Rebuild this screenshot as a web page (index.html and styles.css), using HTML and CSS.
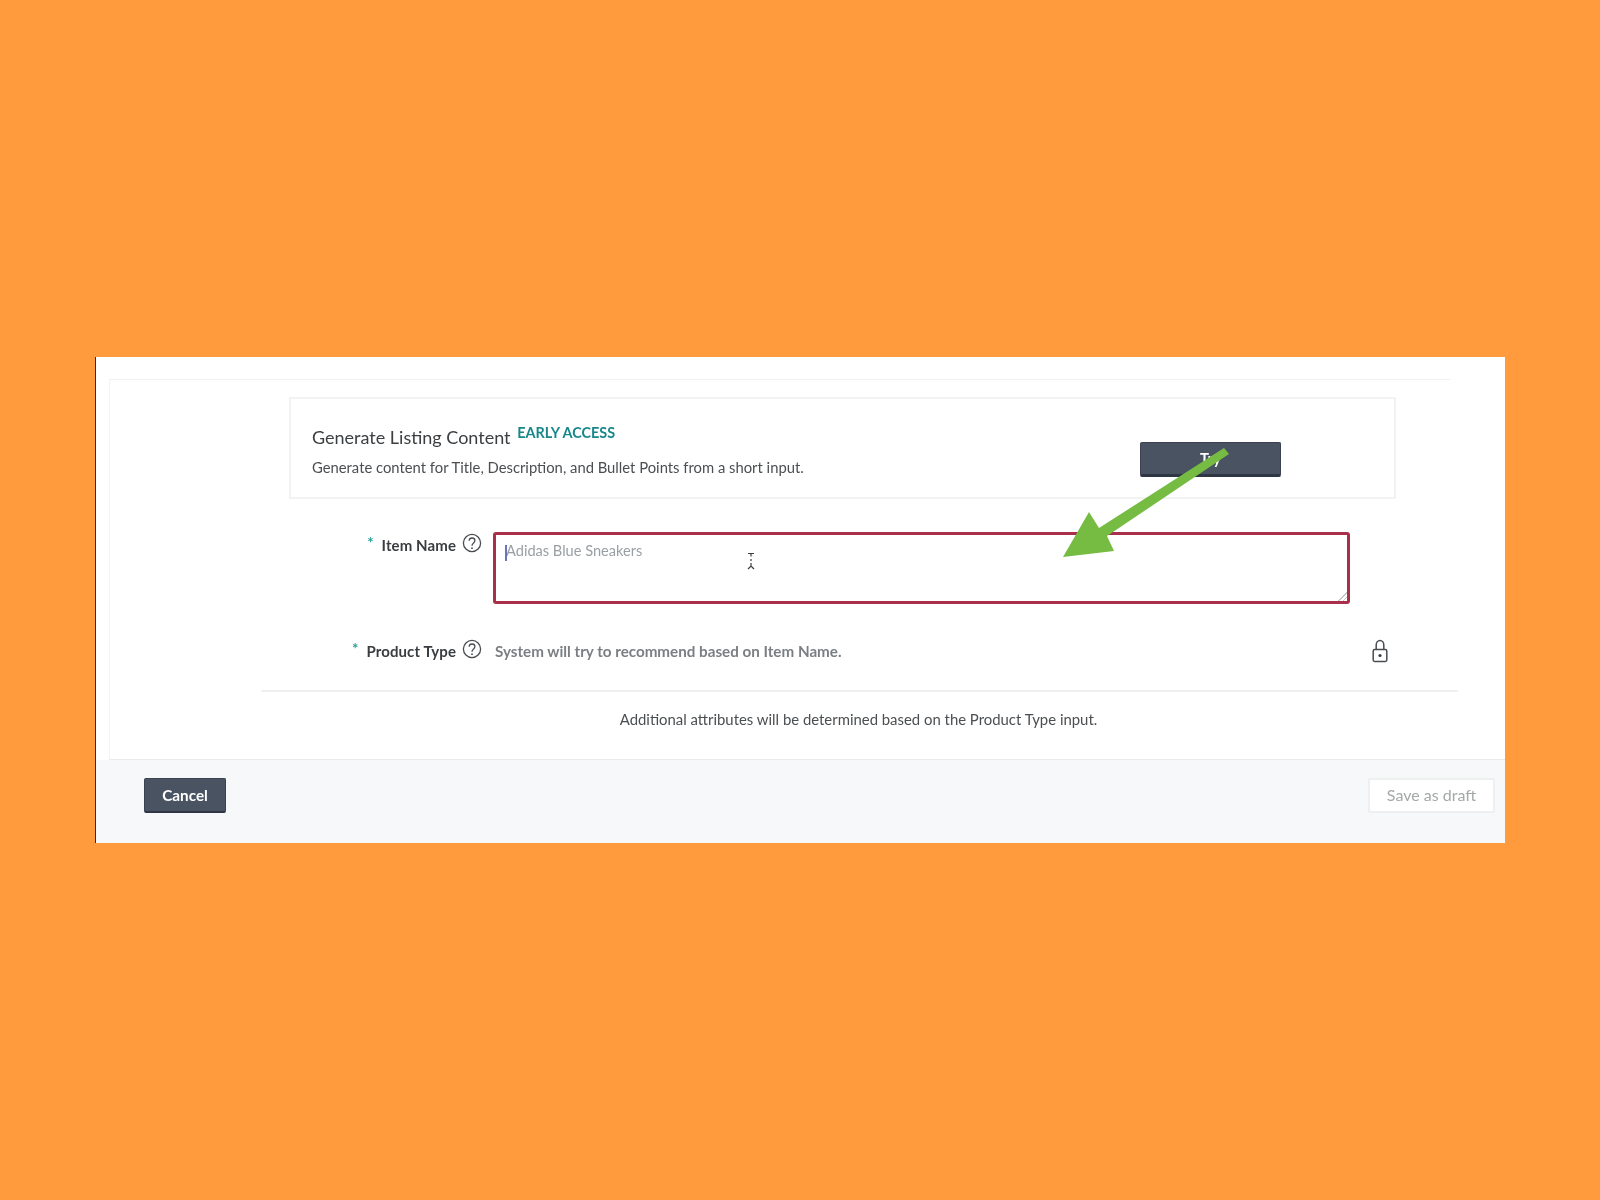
FILE: index.html
```html
<!DOCTYPE html>
<html lang="en">
<head>
<meta charset="utf-8">
<title>Generate Listing Content</title>
<link rel="stylesheet" href="styles.css">
</head>
<body>
<main class="window">
  <section class="panel">
    <div class="card">
      <div class="card-text">
        <h1 class="title">Generate Listing Content <sup class="badge">EARLY ACCESS</sup></h1>
        <p class="desc">Generate content for Title, Description, and Bullet Points from a short input.</p>
      </div>
      <button class="btn btn-try" type="button">Try</button>
    </div>
    <div class="row row-item">
      <div class="label">
        <span class="star">*</span><span class="label-text">Item Name</span>
        <svg class="help" viewBox="0 0 20 20" aria-hidden="true"><circle cx="10" cy="10" r="8.6"/><path d="M7.2 7.8c0-1.7 1.2-2.8 2.9-2.8s2.8 1 2.8 2.5c0 1.2-.7 1.8-1.5 2.6-.8.8-1.4 1.5-1.4 2.7"/><circle class="dot" cx="10" cy="15.2" r=".9"/></svg>
      </div>
      <div class="field-wrap">
        <textarea class="field" placeholder="Adidas Blue Sneakers"></textarea>
        <span class="caret"></span>
      </div>
    </div>
    <div class="row row-type">
      <div class="label">
        <span class="star">*</span><span class="label-text">Product Type</span>
        <svg class="help" viewBox="0 0 20 20" aria-hidden="true"><circle cx="10" cy="10" r="8.6"/><path d="M7.2 7.8c0-1.7 1.2-2.8 2.9-2.8s2.8 1 2.8 2.5c0 1.2-.7 1.8-1.5 2.6-.8.8-1.4 1.5-1.4 2.7"/><circle class="dot" cx="10" cy="15.2" r=".9"/></svg>
      </div>
      <div class="type-value">
        <span>System will try to recommend based on Item Name.</span>
        <svg class="lock" viewBox="0 0 16 24" aria-hidden="true"><path d="M4.2 10.5V6a3.8 4.5 0 0 1 7.6 0v4.5"/><rect x="1.2" y="10.5" width="13.6" height="12" rx="1.4"/><circle class="dot" cx="8" cy="16.5" r="1.6"/></svg>
      </div>
    </div>
    <hr class="divider">
    <p class="note">Additional attributes will be determined based on the Product Type input.</p>
  </section>
  <footer class="footer">
    <button class="btn btn-cancel" type="button">Cancel</button>
    <button class="btn btn-draft" type="button">Save as draft</button>
  </footer>
  <svg class="overlay" viewBox="95 357 1410 486" aria-hidden="true">
    <polygon class="arrow" points="1224,448 1229,454 1107,536 1114,551 1063,557 1089,512 1099,528"/>
    <path class="ibeam" d="M748 553.5h6M751 553.5v3M751 559v2M751 563v3M748 569l3-3 3 3"/>
  </svg>
</main>
</body>
</html>
```
FILE: styles.css
```css
* { box-sizing: border-box; }
html, body { margin: 0; height: 100%; }
body {
  background: #ff9a3d;
  font-family: Lato, "Liberation Sans", sans-serif;
  padding: 357px 95px 0;
}
.window {
  position: relative;
  width: 1410px;
  height: 486px;
  background: #fff;
  border-left: 1px solid #3a2a1a;
  padding-top: 22px;
  display: flex;
  flex-direction: column;
  filter: blur(0.45px);
}
.panel {
  margin-left: 13px;
  height: 381px;
  border-left: 1px solid #f3f4f4;
  border-bottom: 1px solid #e9ebeb;
  background: linear-gradient(#f0f1f1, #f0f1f1) top left / 1340px 1px no-repeat;
  padding-top: 18px;
}
.card {
  margin-left: 179px;
  width: 1107px;
  height: 102px;
  border: 2px solid #f1f2f2;
  display: flex;
  align-items: flex-start;
  padding: 0 0 0 21px;
}
.card-text { padding-top: 26px; }
.title {
  margin: 0;
  font-size: 18px;
  font-weight: 400;
  line-height: 24px;
  color: #3b3f42;
  white-space: nowrap;
}
.badge {
  position: relative;
  top: -6.5px;
  margin-left: 2px;
  font-size: 14.4px;
  font-weight: 700;
  line-height: 0;
  color: #17878a;
  vertical-align: baseline;
}
.desc {
  margin: 8px 0 0;
  font-size: 14.8px;
  line-height: 20px;
  color: #4b4f52;
  white-space: nowrap;
}
.btn {
  font-family: inherit;
  font-size: 15px;
  line-height: 1;
  border-radius: 2px;
  cursor: pointer;
}
.btn-try {
  margin: 43px 113px 0 auto;
  width: 141px;
  height: 35px;
  background: #4a5362;
  border: 1px solid #3b4352;
  border-bottom: 3px solid #2f3744;
  color: #fff;
  font-weight: 700;
}
.row {
  display: grid;
  grid-template-columns: 372px 1fr;
  column-gap: 11px;
  align-items: start;
}
.row-item { margin-top: 33px; }
.row-type { margin-top: 35px; }
.label {
  display: flex;
  justify-content: flex-end;
  align-items: center;
  height: 24px;
}
.row-item .label { margin-top: 1px; }
.star {
  color: #2aa39a;
  font-weight: 700;
  font-size: 15px;
  margin-right: 8px;
  position: relative;
  top: -3px;
}
.label-text {
  font-size: 15px;
  font-weight: 700;
  letter-spacing: 0.1px;
  color: #3a3d40;
  white-space: nowrap;
}
.help {
  width: 20px;
  height: 20px;
  margin-left: 6px;
  margin-top: -4px;
  flex: none;
  fill: none;
  stroke: #4a4d50;
  stroke-width: 1.3;
}
.help .dot { fill: #4a4d50; stroke: none; }
.field-wrap {
  position: relative;
  width: 857px;
  height: 72px;
}
.field {
  display: block;
  width: 100%;
  height: 100%;
  min-height: 72px;
  padding: 6px 10px;
  border: 3px solid #a8304a;
  border-radius: 3px;
  outline: 0;
  font-family: inherit;
  font-size: 14.6px;
  line-height: 20px;
  background: #fff;
}
.field::-webkit-resizer {
  background: linear-gradient(135deg, transparent 68%, #c5c8ca 68%, #c5c8ca 74%, transparent 74%, transparent 84%, #c5c8ca 84%, #c5c8ca 90%, transparent 90%);
}
.field::placeholder { color: #9a9fa3; opacity: 1; }
.caret {
  position: absolute;
  left: 12px;
  top: 13px;
  width: 1.5px;
  height: 16px;
  background: #6a73bd;
}
.type-value {
  width: 897px;
  height: 24px;
  display: flex;
  justify-content: space-between;
  align-items: center;
  padding-left: 2px;
  padding-right: 2px;
  font-size: 15.2px;
  font-weight: 700;
  color: #7b7f83;
  white-space: nowrap;
}
.lock {
  width: 16px;
  height: 24px;
  flex: none;
  fill: none;
  stroke: #4a4d50;
  stroke-width: 1.5;
}
.lock .dot { fill: #3a3d40; stroke: none; }
.divider {
  margin: 27px 0 0 151px;
  width: 1197px;
  height: 2px;
  border: 0;
  background: #eff0f0;
}
.note {
  margin: 17px 0 0 151px;
  width: 1195px;
  text-align: center;
  font-size: 14.9px;
  line-height: 20px;
  color: #4b4f52;
}
.footer {
  flex: 1;
  background: #f7f8f9;
  display: flex;
  justify-content: space-between;
  align-items: flex-start;
  padding: 18px 10px 0 48px;
}
.btn-cancel {
  width: 82px;
  height: 35px;
  padding-top: 3px;
  background: #4a5362;
  border: 1px solid #3b4352;
  border-bottom: 2px solid #2f3744;
  color: #fff;
  font-size: 15.3px;
  font-weight: 700;
}
.btn-draft {
  width: 127px;
  height: 35px;
  padding-bottom: 3px;
  background: #fff;
  border: 2px solid #eef0f0;
  color: #a5a8a9;
  font-size: 16px;
  font-weight: 400;
}
.overlay {
  position: absolute;
  left: -1px;
  top: 0;
  width: 1410px;
  height: 486px;
  pointer-events: none;
}
.arrow { fill: #76bc43; }
.ibeam { fill: none; stroke: #3a3d40; stroke-width: 1.2; }
```
